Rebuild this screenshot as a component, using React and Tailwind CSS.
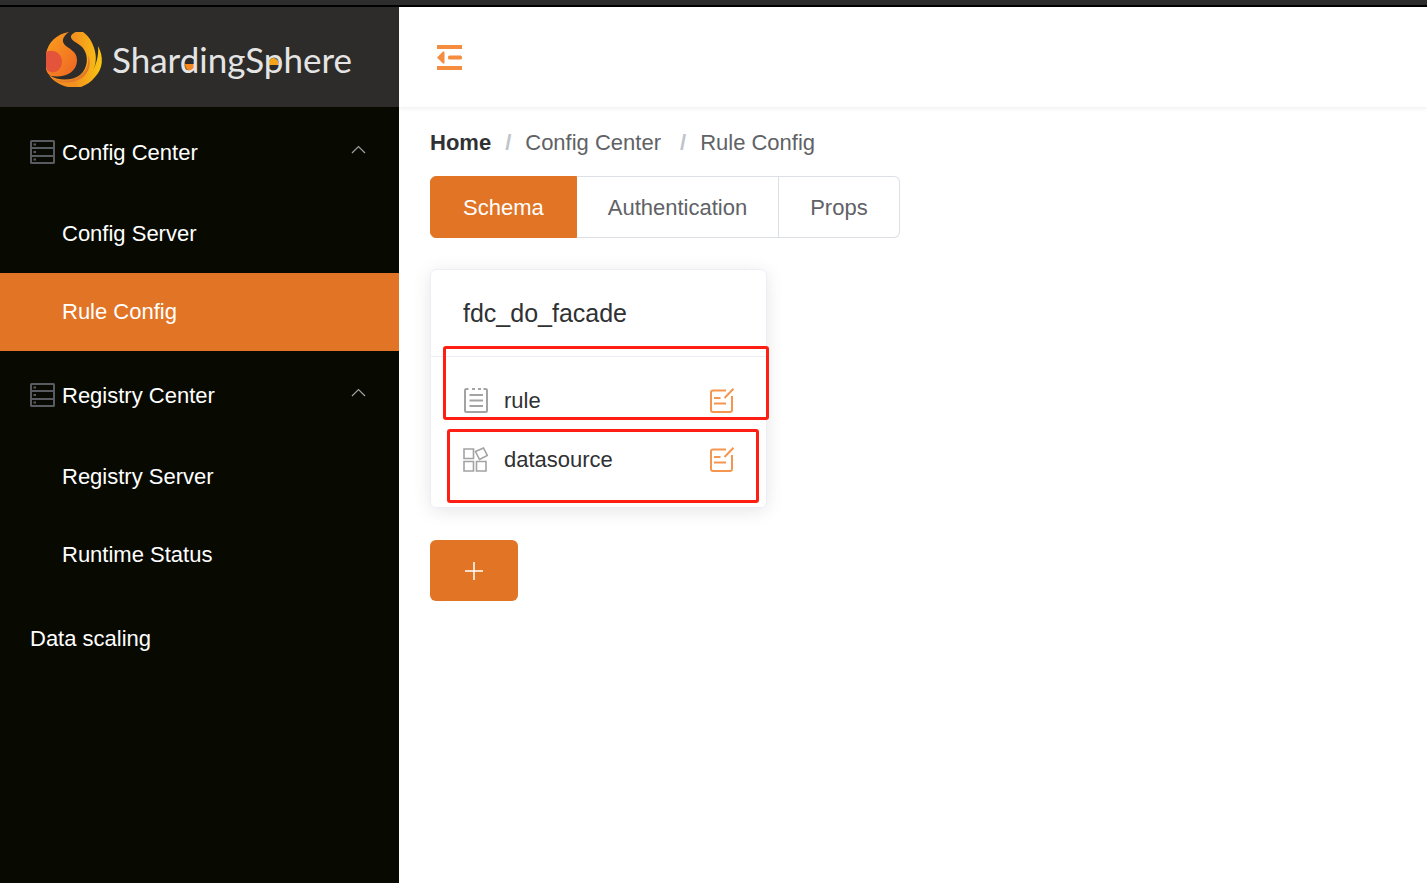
import React, { useState } from "react";

function Logo() {
  return (
    <a href="#home" aria-label="ShardingSphere" className="flex h-[100px] items-center bg-[#2d2c2a] pl-[46px]">
      <svg viewBox="0 0 307 60" className="h-[60px] w-[307px]">
        <defs>
          <linearGradient id="body" x1="0.1" y1="0" x2="0.9" y2="0.8">
            <stop offset="0" stopColor="#fa9f1c" />
            <stop offset="1" stopColor="#f06c24" />
          </linearGradient>
          <linearGradient id="swirl" x1="0" y1="0" x2="1" y2="0">
            <stop offset="0" stopColor="#f08a20" />
            <stop offset="0.5" stopColor="#f3921f" />
            <stop offset="1" stopColor="#fac612" />
          </linearGradient>
        </defs>
        <path
          d="M30 5H37C43 9 48 17 49.500 27C50.500 34 49 40 46 45C50 38 53 29 52 19C58 30 57 42 49 50C45 55 40 58 35 60H22C14 58 7 54 3 48C12 54 26 54 34 48C42 41 43 29 37 21C33 16 24 14 25 9C26 7 28 5.500 30 5Z"
          fill="url(#swirl)"
        />
        <path d="M5 51C14 56 30 54 37 46C42 41 43 34 42 28C46 36 43 46 36 51C29 56 16 58 5 51Z" fill="#e37a28" />
        <path
          d="M23 5C11 7 2 15 0 27V42C1 46 3 48 5 49C18 51 31 46 31 33C31 25 24 22 20 19C15 15 16 10 23 5Z"
          fill="url(#body)"
        />
        <path d="M0 25C8 21 16 27 16 34.500C16 43 8 48 2 44C1 43 0 41 0 39Z" fill="#e4543a" />
        <path d="M139 37H150A5.500 7 0 0 1 139 37Z" fill="#f28a1e" />
        <path d="M222 38H233A5.500 7 0 0 0 222 38Z" fill="#f5a31a" />
        <text x="66" y="46" fill="#e4e4e4" className="font-['Lato',sans-serif] text-[35px]">
          ShardingSphere
        </text>
      </svg>
    </a>
  );
}

function ServerIcon() {
  return (
    <svg viewBox="0 0 25 24" className="h-6 w-[25px]" fill="none" stroke="#585b60" strokeWidth="2">
      <rect x="1" y="1" width="23" height="22" rx="0.5" />
      <path d="M1 8H24M1 16H24" strokeWidth="2.200" />
      <path d="M3.500 4.500H6M3.500 12H6M3.500 19.500H6" />
    </svg>
  );
}

function FoldIcon() {
  return (
    <svg viewBox="0 0 25 25" className="h-[25px] w-[25px]" fill="#f68c3e">
      <path d="M0 0H25V4H0ZM0 21H25V25H0ZM0 12.500L6 6.500Q7.500 6 7.500 7.500V17.500Q7.500 19 6 18.500Z" />
      <rect x="11" y="10.500" width="14" height="4" rx="1.500" />
    </svg>
  );
}

function RuleIcon() {
  return (
    <svg viewBox="0 0 25 25" className="h-[25px] w-[25px]" fill="none" stroke="#a3a3a3" strokeWidth="2">
      <path d="M5.500 1H3.500Q2 1 2 2.500V22.500Q2 24 3.500 24H22.500Q24 24 24 22.500V2.500Q24 1 22.500 1H20.500M9 1H12M15 1H18" />
      <path d="M6.500 7H20M6.500 12.500H20M6.500 18H20" />
    </svg>
  );
}

function SourceIcon() {
  return (
    <svg viewBox="0 0 25 25" className="h-[25px] w-[25px]" fill="none" stroke="#a3a3a3" strokeWidth="1.600">
      <path d="M1 2H10.500V11.500H1ZM1 14.500H10.500V24H1ZM13.500 14.500H23V24H13.500Z" />
      <path d="M12.500 4.500L20.500 1L24.300 8.500L16.500 12.500Z" />
    </svg>
  );
}

function EditIcon() {
  return (
    <svg viewBox="0 0 25 25" className="h-[25px] w-[25px]" fill="none" stroke="#f59650" strokeWidth="2">
      <path d="M17 2.500H4Q2 2.500 2 4.500V22Q2 24 4 24H21Q23 24 23 22V8" />
      <path d="M24.500 .8L15.500 10M5 10H11.500M5 15.500H17" />
    </svg>
  );
}

function Group({ title, items, current, onPick }) {
  const [open, setOpen] = useState(true);
  return (
    <li>
      <button
        type="button"
        aria-expanded={open}
        onClick={() => setOpen(!open)}
        className="flex h-[87px] w-full items-center gap-[7px] pt-0.5 pr-[33px] pl-[30px] text-left"
      >
        <span className="pb-0.5">
          <ServerIcon />
        </span>
        <span className="flex-1">{title}</span>
        <svg viewBox="0 0 16 16" className="h-4 w-4" fill="none" stroke="#a0a0a0" strokeWidth="1.200">
          <path d={open ? "M2 8L8.500 1.500L15 8" : "M2 2L8.500 8.500L15 2"} />
        </svg>
      </button>
      {open && (
        <ul>
          {items.map((item) => (
            <li key={item}>
              <a
                href="#menu"
                onClick={() => onPick(item)}
                className={
                  item === current
                    ? "flex h-[78px] items-center bg-[#e17425] pb-0.5 pl-[62px]"
                    : "flex h-[78px] items-center pb-0.5 pl-[62px]"
                }
              >
                {item}
              </a>
            </li>
          ))}
        </ul>
      )}
    </li>
  );
}

function Row({ icon, name }) {
  return (
    <li className="flex h-[33px] items-center">
      {icon}
      <span className="ml-4 flex-1">{name}</span>
      <button type="button" aria-label={"Edit " + name}>
        <EditIcon />
      </button>
    </li>
  );
}

const TABS = ["Schema", "Authentication", "Props"];

export default function App() {
  const [current, setCurrent] = useState("Rule Config");
  const [tab, setTab] = useState("Schema");
  return (
    <div className="flex min-h-screen flex-col bg-white font-['Liberation_Sans',Arial,sans-serif] text-[22px] leading-[33px] text-[#303133]">
      <div className="h-[7px] border-b-2 border-black bg-[#2d2d2d]" />
      <div className="flex flex-1">
        <aside className="w-[399px] shrink-0 bg-[#080a02] text-white">
          <Logo />
          <nav className="pt-px">
            <ul>
              <Group title="Config Center" items={["Config Server", "Rule Config"]} current={current} onPick={setCurrent} />
              <Group title="Registry Center" items={["Registry Server", "Runtime Status"]} current={current} onPick={setCurrent} />
              <li>
                <a href="#scaling" className="flex h-[87px] items-center pt-0.5 pl-[30px]">
                  Data scaling
                </a>
              </li>
            </ul>
          </nav>
        </aside>
        <div className="min-w-0 flex-1">
          <header className="flex h-[100px] items-center pl-[38px] shadow-[0_2px_4px_rgba(0,21,41,0.06)]">
            <button type="button" aria-label="Collapse menu">
              <FoldIcon />
            </button>
          </header>
          <main className="px-[31px] pt-[19px]">
            <nav aria-label="Breadcrumb" className="flex items-center gap-[14px] text-[#606266]">
              <a href="#home" className="font-bold text-[#303133]">
                Home
              </a>
              <span className="font-bold text-[#c0c4cc]">/</span>
              <a href="#config" className="pr-[5px]">Config Center</a>
              <span className="font-bold text-[#c0c4cc]">/</span>
              <span>Rule Config</span>
            </nav>
            <div className="mt-[17px] flex">
              {TABS.map((name) => (
                <button
                  key={name}
                  type="button"
                  aria-pressed={name === tab}
                  onClick={() => setTab(name)}
                  className={
                    name === tab
                      ? "h-[62px] border border-[#e17425] bg-[#e17425] px-8 text-white first:rounded-l-md last:rounded-r-md"
                      : "h-[62px] border-y border-r border-[#dcdfe6] px-[31px] text-[#606266] first:rounded-l-md first:border-l last:rounded-r-md"
                  }
                >
                  {name}
                </button>
              ))}
            </div>
            <section className="relative mt-[31px] w-[337px] rounded-md border border-[#ebeef5] shadow-[0_3px_18px_rgba(0,0,0,0.1)]">
              <h2 className="border-b border-[#ebeef5] px-8 pt-[27px] pb-[26px] text-[25px]">fdc_do_facade</h2>
              <ul className="flex flex-col gap-[26px] px-8 pt-[27px] pb-[31px]">
                <Row icon={<RuleIcon />} name="rule" />
                <Row icon={<SourceIcon />} name="datasource" />
              </ul>
              <div className="pointer-events-none absolute top-[76px] left-3 h-[74px] w-[326px] rounded-[3px] border-3 border-[#ff1e12]" />
              <div className="pointer-events-none absolute top-[159px] left-4 h-[74px] w-[312px] rounded-[3px] border-3 border-[#ff1e12]" />
            </section>
            <button
              type="button"
              aria-label="Add schema"
              className="mt-8 flex h-[61px] w-[88px] items-center justify-center rounded-md bg-[#e17425]"
            >
              <svg viewBox="0 0 18 18" className="h-[18px] w-[18px]" stroke="#fff" strokeWidth="1.500">
                <path d="M9 0V18M0 9H18" />
              </svg>
            </button>
          </main>
        </div>
      </div>
    </div>
  );
}
